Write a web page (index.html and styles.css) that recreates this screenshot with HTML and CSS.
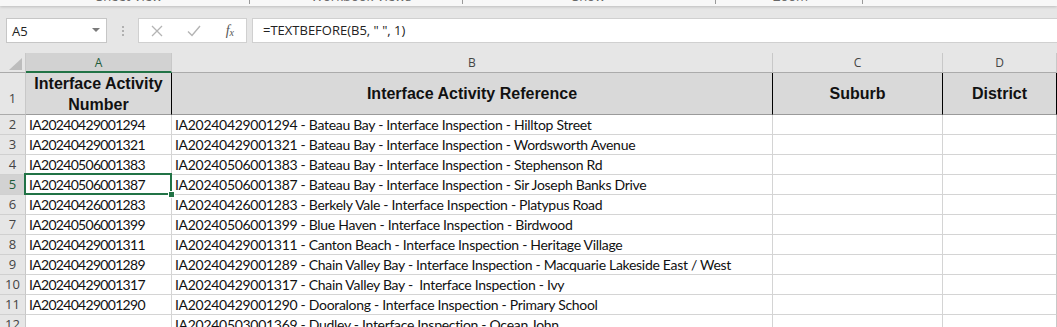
FILE: index.html
```html
<!DOCTYPE html>
<html lang="en">
<head>
    <meta charset="UTF-8">
    <title>Interface Activity</title>
    <link rel="stylesheet" href="styles.css">
</head>
<body>
    <div class="ribbon">
        <span class="group-label g-sheet">Sheet View</span>
        <span class="sep s1"></span>
        <span class="group-label g-book">Workbook Views</span>
        <span class="sep s2"></span>
        <span class="group-label g-show">Show</span>
        <span class="sep s3"></span>
        <span class="group-label g-zoom">Zoom</span>
        <span class="sep s4"></span>
    </div>

    <div class="formula-bar">
        <div class="name-box">
            <span>A5</span>
            <svg class="drop" width="8" height="5" viewBox="0 0 8 5"><path d="M0 0 L8 0 L4 4 Z" fill="#7a7a7a"/></svg>
        </div>
        <div class="grip"><i></i><i></i><i></i></div>
        <div class="fx-box">
            <svg width="12" height="12" viewBox="0 0 12 12"><path d="M1 1 L11 11 M11 1 L1 11" stroke="#b4b4b4" stroke-width="1.3" fill="none"/></svg>
            <svg width="14" height="12" viewBox="0 0 14 12"><path d="M1 6.5 L5 10.5 L13 1" stroke="#b4b4b4" stroke-width="1.4" fill="none"/></svg>
            <span class="fx">f<sub>x</sub></span>
        </div>
        <div class="formula">=TEXTBEFORE(B5, " ", 1)</div>
    </div>

    <div class="sheet">
        <div class="corner"><svg width="13" height="12" viewBox="0 0 13 12"><path d="M13 0 L13 12 L0 12 Z" fill="#bdbdbd"/></svg></div>
        <div class="col-head active">A</div>
        <div class="col-head">B</div>
        <div class="col-head">C</div>
        <div class="col-head last">D</div>

        <div class="row-head tall">1</div>
        <div class="title">Interface Activity Number</div>
        <div class="title">Interface Activity Reference</div>
        <div class="title">Suburb</div>
        <div class="title last">District</div>

        <div class="row-head">2</div><div class="cell num">IA20240429001294</div><div class="cell">IA20240429001294 - Bateau Bay - Interface Inspection - Hilltop Street</div><div class="cell"></div><div class="cell last"></div>
        <div class="row-head">3</div><div class="cell num">IA20240429001321</div><div class="cell">IA20240429001321 - Bateau Bay - Interface Inspection - Wordsworth Avenue</div><div class="cell"></div><div class="cell last"></div>
        <div class="row-head">4</div><div class="cell num">IA20240506001383</div><div class="cell">IA20240506001383 - Bateau Bay - Interface Inspection - Stephenson Rd</div><div class="cell"></div><div class="cell last"></div>
        <div class="row-head active">5</div><div class="cell num selected">IA20240506001387</div><div class="cell">IA20240506001387 - Bateau Bay - Interface Inspection - Sir Joseph Banks Drive</div><div class="cell"></div><div class="cell last"></div>
        <div class="row-head">6</div><div class="cell num">IA20240426001283</div><div class="cell">IA20240426001283 - Berkely Vale - Interface Inspection - Platypus Road</div><div class="cell"></div><div class="cell last"></div>
        <div class="row-head">7</div><div class="cell num">IA20240506001399</div><div class="cell">IA20240506001399 - Blue Haven - Interface Inspection - Birdwood</div><div class="cell"></div><div class="cell last"></div>
        <div class="row-head">8</div><div class="cell num">IA20240429001311</div><div class="cell">IA20240429001311 - Canton Beach - Interface Inspection - Heritage Village</div><div class="cell"></div><div class="cell last"></div>
        <div class="row-head">9</div><div class="cell num">IA20240429001289</div><div class="cell">IA20240429001289 - Chain Valley Bay - Interface Inspection - Macquarie Lakeside East / West</div><div class="cell"></div><div class="cell last"></div>
        <div class="row-head">10</div><div class="cell num">IA20240429001317</div><div class="cell">IA20240429001317 - Chain Valley Bay -&nbsp; Interface Inspection - Ivy</div><div class="cell"></div><div class="cell last"></div>
        <div class="row-head">11</div><div class="cell num">IA20240429001290</div><div class="cell">IA20240429001290 - Dooralong - Interface Inspection - Primary School</div><div class="cell"></div><div class="cell last"></div>
        <div class="row-head">12</div><div class="cell"></div><div class="cell">IA20240503001369 - Dudley - Interface Inspection - Ocean John</div><div class="cell"></div><div class="cell last"></div>
    </div>
</body>
</html>
```

FILE: styles.css
```css
body {
    margin: 0;
    width: 1057px;
    height: 327px;
    overflow: hidden;
    background-color: #e6e6e6;
    font-family: "Open Sans", "Noto Sans", sans-serif;
    color: #222;
}

/* bas du ruban */
.ribbon {
    position: relative;
    height: 6px;
    background-color: #f7f7f7;
    box-shadow: 0 1px 3px rgba(0, 0, 0, 0.18);
    overflow: hidden;
}

.group-label {
    position: absolute;
    top: -11px;
    font-size: 13px;
    line-height: 15px;
    color: #666;
}

.g-sheet { left: 96px; }
.g-book { left: 311px; }
.g-show { left: 572px; }
.g-zoom { left: 773px; }

.sep {
    position: absolute;
    top: 0;
    width: 1px;
    height: 4px;
    background-color: #999;
}

.s1 { left: 249px; }
.s2 { left: 462px; }
.s3 { left: 715px; }
.s4 { left: 862px; }

/* barre de formule */
.formula-bar {
    display: flex;
    align-items: center;
    height: 25px;
    padding: 12px 0 10px 6px;
}

.name-box {
    width: 101px;
    height: 25px;
    box-sizing: border-box;
    border: 1px solid #c6c6c6;
    background-color: white;
    display: flex;
    align-items: center;
    justify-content: space-between;
    padding: 0 6px 0 5px;
    font-size: 13px;
}

.grip {
    width: 31px;
    display: flex;
    flex-direction: column;
    align-items: center;
    gap: 2px;
}

.grip i {
    width: 2px;
    height: 2px;
    background-color: #b0b0b0;
}

.fx-box {
    width: 109px;
    height: 25px;
    box-sizing: border-box;
    border: 1px solid #d0d0d0;
    background-color: white;
    display: flex;
    align-items: center;
    justify-content: space-between;
    padding: 0 12px 0 12px;
}

.fx {
    font-family: "Liberation Serif", serif;
    font-style: italic;
    font-size: 14px;
    color: #555;
}

.fx sub {
    font-size: 10px;
    vertical-align: -1px;
}

.formula {
    flex: 1;
    margin-left: 5px;
    height: 25px;
    box-sizing: border-box;
    border: 1px solid #d0d0d0;
    border-right: none;
    background-color: white;
    padding-left: 10px;
    font-size: 13px;
    line-height: 23px;
}

/* feuille */
.sheet {
    display: grid;
    grid-template-columns: 26px 146px 601px 170px 114px;
    grid-auto-rows: 20px;
    grid-template-rows: 20px 42px;
    background-color: white;
}

.corner {
    background-color: #e6e6e6;
    border-right: 1px solid #c8c8c8;
    border-bottom: 1px solid #ababab;
    display: flex;
    align-items: flex-end;
    justify-content: flex-end;
    padding: 0 3px 2px 0;
    box-sizing: border-box;
}

.col-head {
    background-color: #e6e6e6;
    border-right: 1px solid #c8c8c8;
    border-bottom: 1px solid #ababab;
    box-sizing: border-box;
    text-align: center;
    font-size: 12px;
    line-height: 20px;
    color: #444;
}

.col-head.active {
    background-color: #d2d2d2;
    border-bottom: 2px solid #217346;
    color: #1e5c3a;
    line-height: 19px;
}

.row-head {
    background-color: #e6e6e6;
    border-right: 1px solid #c8c8c8;
    border-bottom: 1px solid #d0d0d0;
    box-sizing: border-box;
    text-align: center;
    font-size: 13px;
    line-height: 19px;
    color: #444;
}

.row-head.tall {
    line-height: 31px;
    display: flex;
    align-items: flex-end;
    justify-content: center;
    border-bottom-color: #ababab;
}

.row-head.active {
    background-color: #d2d2d2;
    color: #1e5c3a;
}

.title {
    background-color: #d9d9d9;
    border-right: 1px solid black;
    border-bottom: 1px solid #9a9a9a;
    box-sizing: border-box;
    display: flex;
    align-items: center;
    justify-content: center;
    text-align: center;
    font-family: "Liberation Sans", Arial, sans-serif;
    font-weight: bold;
    font-size: 16px;
    line-height: 21px;
    color: #111;
    padding: 0 8px;
}

.cell {
    border-right: 1px solid #d4d4d4;
    border-bottom: 1px solid #d4d4d4;
    box-sizing: border-box;
    font-family: Lato, "Open Sans", sans-serif;
    font-size: 14px;
    letter-spacing: -0.3px;
    line-height: 20px;
    padding-left: 3px;
    white-space: nowrap;
    color: #111;
}

.cell.num {
    letter-spacing: -0.7px;
}

.last {
    border-right-color: #c8c8c8;
}

.title.last {
    border-right-color: black;
}

.cell.selected {
    position: relative;
}

.cell.selected::before {
    content: "";
    position: absolute;
    left: -2px;
    top: -2px;
    right: -1px;
    bottom: -1px;
    border: 2px solid #217346;
}

.cell.selected::after {
    content: "";
    position: absolute;
    right: -4px;
    bottom: -4px;
    width: 5px;
    height: 5px;
    background-color: #217346;
    border: 1px solid white;
}
```
